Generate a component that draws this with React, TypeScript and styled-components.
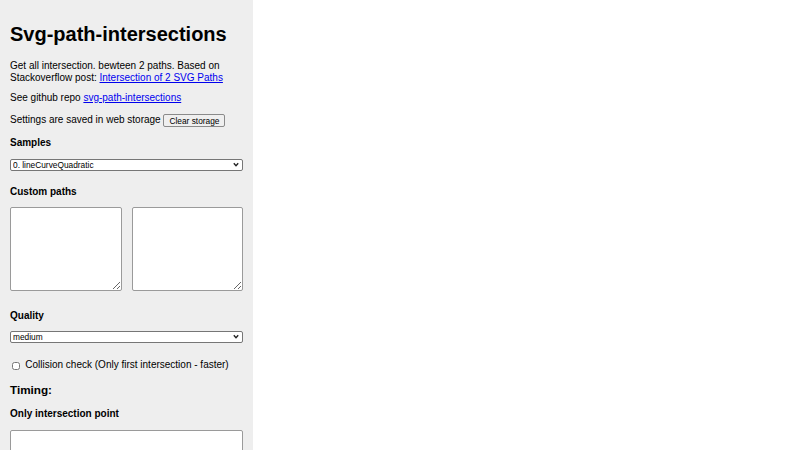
import React from "react";
import styled, { createGlobalStyle } from "styled-components";

const Global = createGlobalStyle`
  html, body { margin: 0; padding: 0; overflow: hidden; background: #fff; }
  * { box-sizing: border-box; }
  body { font-family: "Liberation Sans", Arial, Helvetica, sans-serif; font-size: 10px; color: #000; }
`;

const Page = styled.div`
  display: flex;
  height: 100vh;
  width: 100vw;
`;

const Sidebar = styled.aside`
  width: 253px;
  flex: none;
  background: #eeeeee;
  padding: 10px 10px 0 10px;
  display: flex;
  flex-direction: column;
  overflow: hidden;
`;

const Canvas = styled.main`
  flex: 1;
  background: #fff;
`;

const Title = styled.h1`
  margin: 13px 0 0 0;
  font-size: 20px;
  line-height: 23px;
  font-weight: bold;
`;

const Para = styled.p<{ $mt: number }>`
  margin: ${(p) => p.$mt}px 0 0 0;
  font-size: 10px;
  line-height: 11.5px;
`;

const Row = styled.div<{ $mt: number }>`
  margin-top: ${(p) => p.$mt}px;
  display: flex;
  align-items: flex-start;
  line-height: 11.5px;
  white-space: pre;
`;

const Link = styled.a`
  color: #0000ee;
  text-decoration: underline;
`;

const Button = styled.button`
  margin-top: 0.5px;
  height: 13px;
  padding: 0 5px;
  font-family: inherit;
  font-size: 8.33px;
  line-height: 10px;
  background: #efefef;
  color: #000;
  border: 1px solid #8a8a8a;
  border-radius: 2px;
`;

const Heading4 = styled.h4<{ $mt: number }>`
  margin: ${(p) => p.$mt}px 0 0 0;
  font-size: 10px;
  line-height: 11.5px;
  font-weight: bold;
`;

const Heading3 = styled.h3<{ $mt: number }>`
  margin: ${(p) => p.$mt}px 0 0 0;
  font-size: 11.7px;
  line-height: 13.5px;
  font-weight: bold;
`;

const SelectWrap = styled.div<{ $mt: number }>`
  position: relative;
  margin-top: ${(p) => p.$mt}px;
  height: 12px;
`;

const Select = styled.select`
  appearance: none;
  display: block;
  width: 100%;
  height: 12px;
  padding: 0 0 0 2px;
  font-family: inherit;
  font-size: 8.33px;
  line-height: 10px;
  color: #000;
  background: #fff;
  border: 1px solid #767676;
  border-radius: 2px;
`;

const Chevron = styled.svg`
  position: absolute;
  right: 4px;
  top: 3.5px;
  width: 6px;
  height: 5px;
  pointer-events: none;
`;

const AreaRow = styled.div<{ $mt: number }>`
  margin-top: ${(p) => p.$mt}px;
  display: flex;
  gap: 10px;
`;

const Area = styled.textarea<{ $h: number }>`
  flex: 1;
  min-width: 0;
  height: ${(p) => p.$h}px;
  border: 1px solid #9a9a9a;
  border-radius: 2px;
  background: #fff;
  margin: 0;
  padding: 2px;
  font-size: 8px;
`;

const CheckRow = styled.label<{ $mt: number }>`
  margin-top: ${(p) => p.$mt}px;
  display: flex;
  align-items: flex-start;
  line-height: 11.5px;
  font-size: 10px;
`;

const Check = styled.input`
  width: 8px;
  height: 8px;
  margin: 2.5px 5px 0 2.3px;
  flex: none;
`;

function DropDown({ mt, options }: { mt: number; options: string[] }) {
  return (
    <SelectWrap $mt={mt}>
      <Select defaultValue={options[0]}>
        {options.map((o) => (
          <option key={o}>{o}</option>
        ))}
      </Select>
      <Chevron viewBox="0 0 6 5">
        <path d="M0.8 1.2 L3 3.6 L5.2 1.2" fill="none" stroke="#222" strokeWidth="1.4" />
      </Chevron>
    </SelectWrap>
  );
}

export default function App() {
  return (
    <>
      <Global />
      <Page>
        <Sidebar>
          <Title>Svg-path-intersections</Title>
          <Para $mt={14}>
            Get all intersection. bewteen 2 paths. Based on Stackoverflow post:{" "}
            <Link href="#">Intersection of 2 SVG Paths</Link>
          </Para>
          <Para $mt={9}>
            See github repo <Link href="#">svg-path-intersections</Link>
          </Para>
          <Row $mt={10}>
            <span>Settings are saved in web storage </span>
            <Button>Clear storage</Button>
          </Row>
          <Heading4 $mt={9.5}>Samples</Heading4>
          <DropDown
            mt={10.5}
            options={["0. lineCurveQuadratic", "1. lineLine", "2. curveCurve", "3. arcLine"]}
          />
          <Heading4 $mt={15.5}>Custom paths</Heading4>
          <AreaRow $mt={9.3}>
            <Area $h={84} />
            <Area $h={84} />
          </AreaRow>
          <Heading4 $mt={19}>Quality</Heading4>
          <DropDown mt={9.6} options={["medium", "low", "high"]} />
          <CheckRow $mt={16.5}>
            <Check type="checkbox" />
            <span>Collision check (Only first intersection - faster)</span>
          </CheckRow>
          <Heading3 $mt={12.3}>Timing:</Heading3>
          <Heading4 $mt={11}>Only intersection point</Heading4>
          <AreaRow $mt={10.8}>
            <Area $h={84} />
          </AreaRow>
        </Sidebar>
        <Canvas />
      </Page>
    </>
  );
}
